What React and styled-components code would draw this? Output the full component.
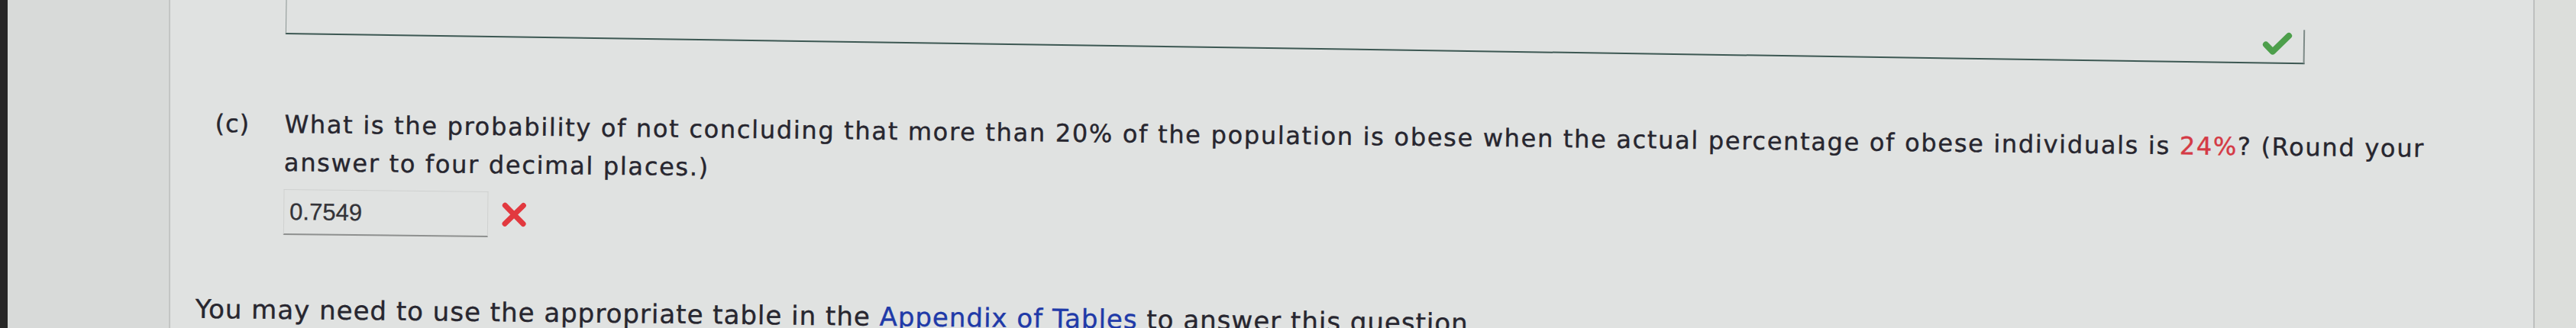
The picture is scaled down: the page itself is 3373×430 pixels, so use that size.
import React from 'react'
import styled, { createGlobalStyle } from 'styled-components'

const GlobalStyle = createGlobalStyle`
  html, body {
    margin: 0;
    padding: 0;
    background: #dfe1e0;
    overflow: hidden;
  }
`

const Screen = styled.div`
  display: grid;
  grid-template-columns: 10px 213px 1fr 56px;
  width: 3373px;
  height: 430px;
  overflow: hidden;
  font-family: "DejaVu Sans", Verdana, sans-serif;
`

const Bezel = styled.div`
  background: #262626;
`

const Gutter = styled.div`
  background: #d8dad9;
  border-right: 2px solid #c3c5c4;
`

const RightGutter = styled.div`
  background: #dcdedb;
  border-left: 2px solid #bec0bf;
`

const Main = styled.div`
  background: #e0e2e1;
  overflow: hidden;
`

const Tilt = styled.div`
  transform: rotate(0.65deg);
  transform-origin: 150px 120px;
`

const PrevAnswerBox = styled.div`
  margin-left: 150px;
  width: 2644px;
  height: 45px;
  box-sizing: border-box;
  border-left: 1px solid #8a9593;
  border-right: 2px solid #7d8a87;
  border-bottom: 2px solid #3d5853;
  display: flex;
  justify-content: flex-end;
  align-items: flex-end;
  padding: 0 14px 8px 0;
  transform: rotate(0.2deg);
  transform-origin: left bottom;
`

const QuestionRow = styled.div`
  display: flex;
  margin-top: 93px;
  padding-left: 59px;
`

const PartLabel = styled.div`
  width: 91px;
  flex: none;
  font-size: 32px;
  line-height: 50px;
  letter-spacing: 1px;
  color: #27262f;
  -webkit-text-stroke: 0.4px #27262f;
`

const Body = styled.div`
  width: 2850px;
`

const Prompt = styled.p`
  margin: 0;
  font-size: 32px;
  line-height: 50px;
  letter-spacing: 1.7px;
  color: #27262f;
  -webkit-text-stroke: 0.4px currentColor;
`

const Highlight = styled.span`
  color: ${p => p.tone || '#d43a45'};
`

const AnswerRow = styled.div`
  display: flex;
  align-items: center;
  margin-top: 10px;
`

const AnswerField = styled.div`
  width: 268px;
  height: 60px;
  box-sizing: border-box;
  border: 1px solid #cfd1d0;
  border-bottom: 2px solid #8e908f;
  padding-left: 7px;
  display: flex;
  align-items: center;
  font-family: "Liberation Sans", Arial, sans-serif;
  font-size: 31px;
  color: #333338;
  -webkit-text-stroke: 0.3px #333338;
`

const Mark = styled.svg`
  flex: none;
  margin-left: ${p => p.gap || 0}px;
`

const Footnote = styled.p`
  margin: 72px 0 0 36px;
  font-size: 34px;
  line-height: 52px;
  letter-spacing: 1px;
  color: #27262f;
  white-space: nowrap;
  -webkit-text-stroke: 0.4px currentColor;
`

const AppendixLink = styled.a`
  color: #1f3aa8;
  text-decoration: none;
`

const CheckIcon = () => (
  <Mark width="40" height="33" viewBox="0 0 40 33">
    <path d="M5 18 L14 27 L35 6" fill="none" stroke="#4d9f4b" strokeWidth="8" strokeLinecap="round" strokeLinejoin="round" />
  </Mark>
)

const CrossIcon = () => (
  <Mark gap={16} width="36" height="34" viewBox="0 0 36 34">
    <path d="M6 5 L30 29 M30 5 L6 29" fill="none" stroke="#e2393f" strokeWidth="7" strokeLinecap="round" />
  </Mark>
)

export default function App() {
  return (
    <>
      <GlobalStyle />
      <Screen>
        <Bezel />
        <Gutter />
        <Main>
          <Tilt>
            <PrevAnswerBox>
              <CheckIcon />
            </PrevAnswerBox>
            <QuestionRow>
              <PartLabel>(c)</PartLabel>
              <Body>
                <Prompt>
                  What is the probability of not concluding that more than 20% of the population is obese when the actual
                  percentage of obese individuals is <Highlight>24%</Highlight>? (Round your answer to four decimal places.)
                </Prompt>
                <AnswerRow>
                  <AnswerField>0.7549</AnswerField>
                  <CrossIcon />
                </AnswerRow>
              </Body>
            </QuestionRow>
            <Footnote>
              You may need to use the appropriate table in the <AppendixLink href="#">Appendix of Tables</AppendixLink> to answer this question.
            </Footnote>
          </Tilt>
        </Main>
        <RightGutter />
      </Screen>
    </>
  )
}
